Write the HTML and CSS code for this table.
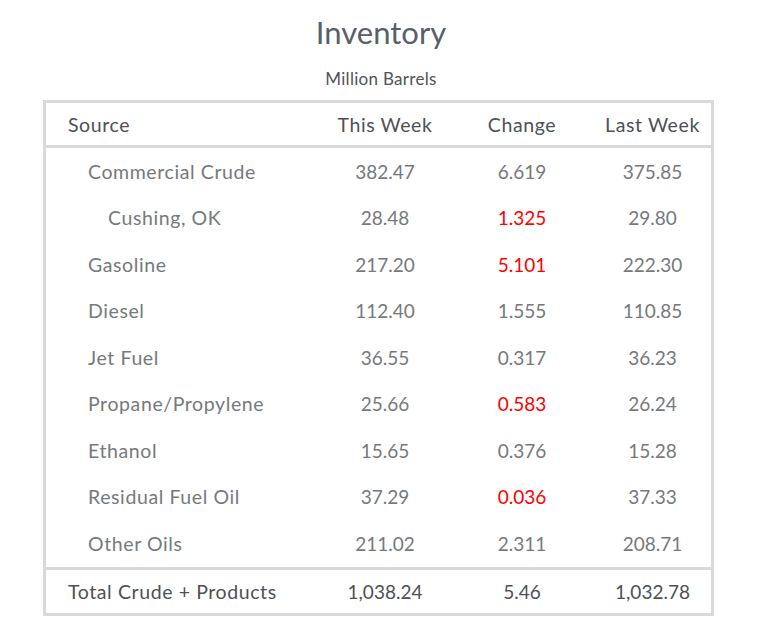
FILE: index.html
```html
<!DOCTYPE html>
<html>
<head>
<meta charset="utf-8">
<link rel="stylesheet" href="styles.css">
</head>
<body>
<div class="page">
  <h1 class="title">Inventory</h1>
  <div class="subtitle">Million Barrels</div>
  <div class="table">
    <div class="row head">
      <div class="name">Source</div><div class="word">This Week</div><div class="word">Change</div><div class="word">Last Week</div>
    </div>
    <div class="body">
      <div class="row"><div class="name l1">Commercial Crude</div><div>382.47</div><div>6.619</div><div>375.85</div></div>
      <div class="row"><div class="name l2">Cushing, OK</div><div>28.48</div><div class="neg">1.325</div><div>29.80</div></div>
      <div class="row"><div class="name l1">Gasoline</div><div>217.20</div><div class="neg">5.101</div><div>222.30</div></div>
      <div class="row"><div class="name l1">Diesel</div><div>112.40</div><div>1.555</div><div>110.85</div></div>
      <div class="row"><div class="name l1">Jet Fuel</div><div>36.55</div><div>0.317</div><div>36.23</div></div>
      <div class="row"><div class="name l1">Propane/Propylene</div><div>25.66</div><div class="neg">0.583</div><div>26.24</div></div>
      <div class="row"><div class="name l1">Ethanol</div><div>15.65</div><div>0.376</div><div>15.28</div></div>
      <div class="row"><div class="name l1">Residual Fuel Oil</div><div>37.29</div><div class="neg">0.036</div><div>37.33</div></div>
      <div class="row"><div class="name l1">Other Oils</div><div>211.02</div><div>2.311</div><div>208.71</div></div>
    </div>
    <div class="row total">
      <div class="name">Total Crude + Products</div><div>1,038.24</div><div>5.46</div><div>1,032.78</div>
    </div>
  </div>
</div>
</body>
</html>
```
FILE: styles.css
```css
html, body { margin: 0; padding: 0; background: #fff; }
body { font-family: Lato, "Open Sans", sans-serif; }
.page { width: 762px; padding-top: 12px; }
.title {
  margin: 0;
  text-align: center;
  font-weight: 400;
  font-size: 31px;
  line-height: 40px;
  color: #56606a;
}
.subtitle {
  text-align: center;
  font-size: 17px;
  letter-spacing: 0.3px;
  line-height: 20px;
  margin-top: 17px;
  color: #4f5458;
}
.table {
  margin: 11px 0 0 43px;
  width: 665px;
  border: 3px solid #d9d9d9;
}
.row {
  display: grid;
  grid-template-columns: 274px 130px 144px 117px;
  align-items: center;
  font-size: 19px;
  color: #76797c;
}
.row > div { text-align: center; }
.row > .name { text-align: left; font-size: 19.5px; letter-spacing: 0.6px; }
.row > .word { font-size: 19.5px; letter-spacing: 0.6px; }
.head { height: 42px; border-bottom: 3px solid #d9d9d9; color: #4d5155; }
.head .name, .total .name { padding-left: 22px; }
.body .row { height: 46.5px; }
.l1 { padding-left: 42px; }
.l2 { padding-left: 62px; }
.neg { color: #ff0000; }
.total { height: 43px; border-top: 3px solid #d9d9d9; color: #4d5155; }
```
